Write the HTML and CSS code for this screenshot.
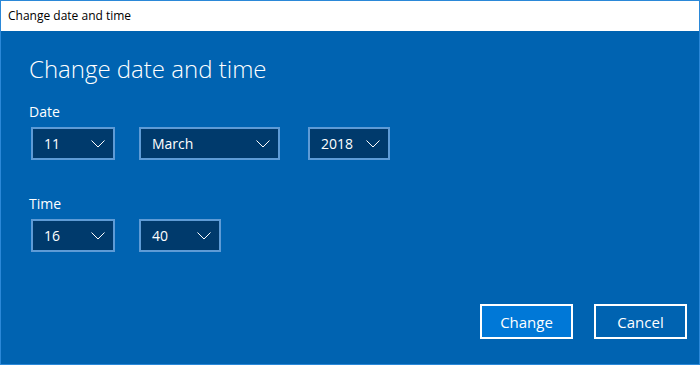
FILE: index.html
```html
<!DOCTYPE html>
<html>
<head>
<meta charset="utf-8">
<link rel="stylesheet" href="styles.css">
</head>
<body>
<div class="window">
  <div class="titlebar">Change date and time</div>
  <div class="content">
    <h1 class="heading">Change date and time</h1>
    <div class="label label-date">Date</div>
    <div class="row">
      <div class="combo combo-day"><span>11</span><svg class="chev" width="14" height="8" viewBox="0 0 14 8"><path d="M0.5 0.5 L7 7 L13.5 0.5" fill="none" stroke="#ffffff" stroke-width="1"/></svg></div>
      <div class="combo combo-month"><span>March</span><svg class="chev" width="14" height="8" viewBox="0 0 14 8"><path d="M0.5 0.5 L7 7 L13.5 0.5" fill="none" stroke="#ffffff" stroke-width="1"/></svg></div>
      <div class="combo combo-year"><span>2018</span><svg class="chev" width="14" height="8" viewBox="0 0 14 8"><path d="M0.5 0.5 L7 7 L13.5 0.5" fill="none" stroke="#ffffff" stroke-width="1"/></svg></div>
    </div>
    <div class="label label-time">Time</div>
    <div class="row">
      <div class="combo combo-day"><span>16</span><svg class="chev" width="14" height="8" viewBox="0 0 14 8"><path d="M0.5 0.5 L7 7 L13.5 0.5" fill="none" stroke="#ffffff" stroke-width="1"/></svg></div>
      <div class="combo combo-min"><span>40</span><svg class="chev" width="14" height="8" viewBox="0 0 14 8"><path d="M0.5 0.5 L7 7 L13.5 0.5" fill="none" stroke="#ffffff" stroke-width="1"/></svg></div>
    </div>
    <div class="buttons">
      <div class="btn btn-primary">Change</div>
      <div class="btn">Cancel</div>
    </div>
  </div>
</div>
</body>
</html>
```
FILE: styles.css
```css
html, body {
  margin: 0;
  padding: 0;
}
body {
  font-family: "Open Sans", "Noto Sans", sans-serif;
  background: #0063b1;
}
.window {
  width: 700px;
  height: 365px;
  box-sizing: border-box;
  border: 1px solid #2b88d8;
  background: #0063b1;
  display: flex;
  flex-direction: column;
  overflow: hidden;
}
.titlebar {
  height: 30px;
  background: #ffffff;
  color: #000000;
  font-size: 12px;
  line-height: 30px;
  padding-left: 7px;
  flex: none;
}
.content {
  flex: 1;
  display: flex;
  flex-direction: column;
  padding: 0 12px 0 28px;
  color: #ffffff;
}
.heading {
  margin: 22px 0 0 0;
  font-weight: 300;
  font-size: 24px;
  line-height: 32px;
}
.label {
  font-size: 14px;
  line-height: 20px;
}
.label-date {
  margin-top: 17px;
}
.label-time {
  margin-top: 34px;
}
.row {
  display: flex;
  margin-top: 5px;
  padding-left: 2px;
}
.combo {
  box-sizing: border-box;
  height: 33px;
  border: 2px solid #5e9bd6;
  background: #003a6c;
  display: flex;
  align-items: center;
  justify-content: space-between;
  padding: 0 8px 0 11px;
  font-size: 14px;
  color: #ffffff;
}
.combo span {
  margin-top: -1px;
}
.chev {
  display: block;
}
.combo-day {
  width: 84px;
  margin-right: 24px;
}
.combo-month {
  width: 141px;
  margin-right: 28px;
}
.combo-year {
  width: 82px;
}
.combo-min {
  width: 82px;
}
.buttons {
  margin-top: auto;
  margin-bottom: 25px;
  display: flex;
  justify-content: flex-end;
  gap: 21px;
}
.btn {
  box-sizing: border-box;
  width: 93px;
  height: 35px;
  border: 2px solid #ffffff;
  background: #0063b1;
  color: #ffffff;
  font-size: 15px;
  display: flex;
  align-items: center;
  justify-content: center;
}
.btn-primary {
  background: #0078d7;
}
```
